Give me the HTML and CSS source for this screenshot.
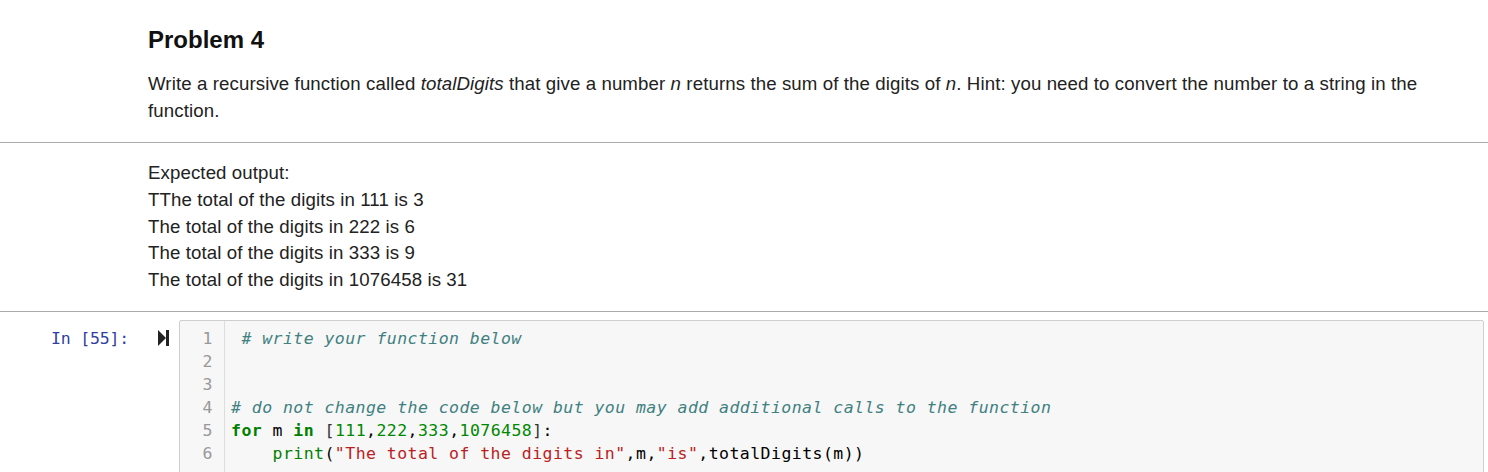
FILE: index.html
```html
<!DOCTYPE html>
<html>
<head>
<meta charset="utf-8">
<link rel="stylesheet" href="styles.css">
</head>
<body>
<div class="text-cell intro">
  <h2 class="title">Problem 4</h2>
  <p class="para">Write a recursive function called <em>totalDigits</em> that give a number <em>n</em> returns the sum of the digits of <em>n</em>. Hint: you need to convert the number to a string in the function.</p>
</div>
<div class="sep"></div>
<div class="text-cell expected">
  <p class="para lines">Expected output:<br>TThe total of the digits in 111 is 3<br>The total of the digits in 222 is 6<br>The total of the digits in 333 is 9<br>The total of the digits in 1076458 is 31</p>
</div>
<div class="sep"></div>
<div class="code-cell">
  <div class="prompt">In [55]:</div>
  <div class="run">
    <svg width="12" height="16" viewBox="0 0 12 16"><polygon points="0,0 8,8 0,16" fill="#222"/><rect x="8" y="0" width="3" height="16" fill="#222"/></svg>
  </div>
  <div class="editor">
    <div class="gutter"><div>1</div><div>2</div><div>3</div><div>4</div><div>5</div><div>6</div></div>
    <div class="code"><div class="ln"> <span class="cm"># write your function below</span></div><div class="ln"> </div><div class="ln"> </div><div class="ln"><span class="cm"># do not change the code below but you may add additional calls to the function</span></div><div class="ln"><span class="kw">for</span> m <span class="kw">in</span> <span class="op">[</span><span class="nm">111</span>,<span class="nm">222</span>,<span class="nm">333</span>,<span class="nm">1076458</span><span class="op">]</span>:</div><div class="ln">    <span class="bi">print</span>(<span class="st">"The total of the digits in"</span>,m,<span class="st">"is"</span>,totalDigits(m))</div></div>
  </div>
</div>
</body>
</html>
```
FILE: styles.css
```css
html, body {
  margin: 0;
  padding: 0;
  background: #fff;
}
body {
  font-family: "Liberation Sans", Arial, sans-serif;
  color: #222;
}
.text-cell {
  padding-left: 148px;
  padding-right: 50px;
}
.intro {
  padding-top: 25px;
  padding-bottom: 18px;
}
.title {
  margin: 0;
  font-size: 24px;
  line-height: 30px;
  font-weight: bold;
  color: #111;
}
.para {
  margin: 16px 0 0 0;
  font-size: 18.67px;
  line-height: 26.67px;
  letter-spacing: 0.1px;
}
.para em {
  font-style: italic;
}
.expected {
  padding-top: 17px;
  padding-bottom: 17px;
}
.expected .para {
  margin: 0;
}
.sep {
  border-top: 1px solid #ababab;
}
.code-cell {
  display: flex;
  padding: 8px 4px 0 0;
  font-family: "DejaVu Sans Mono", monospace;
  font-size: 16.5px;
  line-height: 23px;
}
.prompt {
  width: 99px;
  padding-left: 51px;
  padding-top: 7px;
  color: #303f9f;
  white-space: pre;
  letter-spacing: -0.2px;
}
.run {
  width: 21px;
  padding-left: 8px;
  padding-top: 10px;
}
.run svg {
  display: block;
}
.editor {
  flex: 1;
  display: flex;
  border: 1px solid #cfcfcf;
  border-radius: 2px;
  background: #f7f7f7;
  padding: 6px 0 9px 0;
  letter-spacing: 0.45px;
}
.gutter {
  width: 33px;
  padding-right: 11px;
  text-align: right;
  color: #999;
  border-right: 1px solid #ddd;
  margin: -6px 0 -9px 0;
  padding-top: 6px;
  padding-bottom: 9px;
}
.code {
  padding-left: 6px;
  color: #000;
}
.ln {
  white-space: pre;
  height: 23px;
}
.cm { color: #408080; font-style: italic; }
.kw { color: #008000; font-weight: bold; }
.nm { color: #080; }
.st { color: #ba2121; }
.bi { color: #008000; }
.op { color: #333; }
```
